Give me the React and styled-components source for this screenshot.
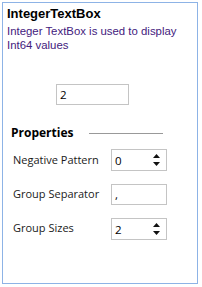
import React from "react";
import styled, { createGlobalStyle } from "styled-components";

const GlobalStyle = createGlobalStyle`
  html, body {
    margin: 0;
    padding: 0;
    background: #fff;
  }
  body {
    font-family: "Liberation Sans", Arial, sans-serif;
  }
`;

// Outer sample panel
const Panel = styled.div`
  box-sizing: border-box;
  margin: 2px 0 0 2px;
  width: 196px;
  height: 282px;
  border: 1px solid #8db3e6;
  padding: 3px 4px 0 4px;
`;

const Title = styled.div`
  font-size: 13px;
  font-weight: bold;
  line-height: 15px;
  color: #000;
`;

const Description = styled.div`
  margin-top: 3px;
  font-size: 11.4px;
  line-height: 14px;
  color: #43207d;
`;

const DemoRow = styled.div`
  display: flex;
  padding: 32px 0 0 49px;
`;

const TextBox = styled.div`
  box-sizing: border-box;
  width: ${({ w }) => w || 56}px;
  height: ${({ h }) => h || 22}px;
  border: 1px solid #c4c4c4;
  display: flex;
  align-items: center;
  justify-content: space-between;
  padding: 0 6px 0 3px;
  font-family: "Open Sans", "Liberation Sans", sans-serif;
  font-size: 11.5px;
  color: #000;
`;

const PropsHeader = styled.div`
  display: flex;
  align-items: center;
  padding: 20px 0 0 4px;
`;

const PropsTitle = styled.div`
  font-family: "Open Sans", "Liberation Sans", sans-serif;
  font-size: 12px;
  font-weight: bold;
  line-height: 16px;
  width: 78px;
`;

const Rule = styled.div`
  width: 74px;
  height: 1px;
  background: #999;
  margin-top: 1px;
`;

const PropList = styled.div`
  display: flex;
  flex-direction: column;
  gap: 13px;
  padding: 8px 0 0 6px;
`;

const PropRow = styled.div`
  display: grid;
  grid-template-columns: 98px 56px;
  align-items: start;
`;

const PropLabel = styled.div`
  font-family: "Open Sans", "Liberation Sans", sans-serif;
  font-size: 11px;
  line-height: 16px;
  padding-top: ${({ top }) => top || 2}px;
  color: #1a1a1a;
`;

const Spin = styled.div`
  display: flex;
  flex-direction: column;
  gap: 4px;
`;

const Arrow = ({ down }) => (
  <svg width="7" height="4" viewBox="0 0 7 4">
    <path d={down ? "M0 0 L7 0 L3.5 4 Z" : "M3.5 0 L7 4 L0 4 Z"} fill="#111" />
  </svg>
);

const Spinner = () => (
  <Spin>
    <Arrow />
    <Arrow down />
  </Spin>
);

export default function App() {
  return (
    <>
      <GlobalStyle />
      <Panel>
        <Title>IntegerTextBox</Title>
        <Description>
          Integer TextBox is used to display
          <br />
          Int64 values
        </Description>
        <DemoRow>
          <TextBox w={73} h={21}>2</TextBox>
        </DemoRow>
        <PropsHeader>
          <PropsTitle>Properties</PropsTitle>
          <Rule />
        </PropsHeader>
        <PropList>
          <PropRow>
            <PropLabel top={3}>Negative Pattern</PropLabel>
            <TextBox>
              0
              <Spinner />
            </TextBox>
          </PropRow>
          <PropRow>
            <PropLabel top={0}>Group Separator</PropLabel>
            <TextBox h={21}>,</TextBox>
          </PropRow>
          <PropRow>
            <PropLabel top={0}>Group Sizes</PropLabel>
            <TextBox>
              2
              <Spinner />
            </TextBox>
          </PropRow>
        </PropList>
      </Panel>
    </>
  );
}
